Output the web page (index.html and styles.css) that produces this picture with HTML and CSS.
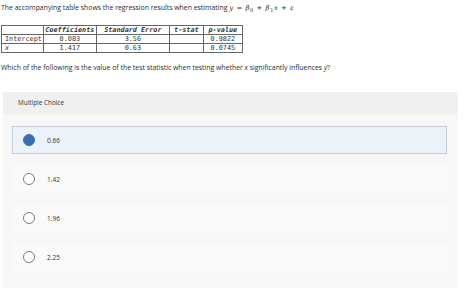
FILE: index.html
```html
<!DOCTYPE html>
<html lang="en">
<head>
    <meta charset="UTF-8">
    <title>Regression Question</title>
    <link rel="stylesheet" href="styles.css">
</head>
<body>
    <div class="question">
        <p class="stem">The accompanying table shows the regression results when estimating <span class="math"><i>y</i> = <i>β</i><sub>0</sub> + <i>β</i><sub>1</sub><i>x</i> + <i>ε</i></span></p>
        <table class="results">
            <tr>
                <th></th>
                <th>Coefficients</th>
                <th>Standard Error</th>
                <th>t-stat</th>
                <th>p-value</th>
            </tr>
            <tr>
                <td class="name">Intercept</td>
                <td>0.083</td>
                <td>3.56</td>
                <td></td>
                <td>0.9822</td>
            </tr>
            <tr>
                <td class="name"><i>x</i></td>
                <td>1.417</td>
                <td>0.63</td>
                <td></td>
                <td>0.0745</td>
            </tr>
        </table>
        <p class="ask">Which of the following is the value of the test statistic when testing whether <i>x</i> significantly influences <i>y</i>?</p>
    </div>

    <div class="choices">
        <div class="choices-head">Multiple Choice</div>
        <div class="choices-body">
            <label class="option selected"><span class="radio"></span>0.66</label>
            <label class="option"><span class="radio"></span>1.42</label>
            <label class="option"><span class="radio"></span>1.96</label>
            <label class="option"><span class="radio"></span>2.25</label>
        </div>
    </div>
</body>
</html>
```

FILE: styles.css
```css
* {
    box-sizing: border-box;
    margin: 0;
    padding: 0;
}
body {
    font-family: "Open Sans", Lato, sans-serif;
    font-size: 6.9px;
    color: #2a2a2a;
    background: #fff;
    width: 474px;
    height: 292px;
    overflow: hidden;
}
.question {
    padding: 3px 0 0 1px;
}
.stem {
    line-height: 9px;
    height: 22px;
}
.math {
    font-family: "DejaVu Serif", serif;
    font-size: 6.8px;
    letter-spacing: 0.6px;
}
.math sub {
    font-size: 5px;
}
.results {
    border-collapse: collapse;
    font-family: "DejaVu Sans Mono", monospace;
    font-size: 6.8px;
    color: #333;
}
.results th,
.results td {
    border: 1px solid #666;
    height: 9px;
    line-height: 7px;
    padding: 0 1px;
    text-align: center;
}
.results th {
    font-style: italic;
    font-weight: bold;
}
.results th:nth-child(1) { width: 41px; }
.results th:nth-child(2) { width: 53px; }
.results th:nth-child(3) { width: 73px; }
.results th:nth-child(4) { width: 34px; }
.results th:nth-child(5) { width: 39px; }
.results td.name {
    text-align: left;
    padding-left: 3px;
}
.ask {
    margin-top: 10px;
    line-height: 9px;
}
.choices {
    margin: 20px 0 0 3px;
    width: 455px;
    background: #f7f7f7;
    padding-bottom: 17px;
}
.choices-head {
    background: #f0f0f0;
    height: 22px;
    line-height: 22px;
    padding-left: 15px;
    font-size: 6.4px;
    color: #333;
}
.choices-body {
    display: flex;
    flex-direction: column;
    gap: 11px;
    padding: 12px 11px 0 9px;
}
.option {
    display: flex;
    align-items: center;
    height: 28px;
    padding-left: 10px;
    background: #fafafa;
    border: 1px solid transparent;
    font-size: 6.5px;
    color: #333;
}
.option.selected {
    background: #ebf2fa;
    border-color: #c3ccd6;
}
.radio {
    width: 12px;
    height: 12px;
    border: 1px solid #7a7a7a;
    border-radius: 50%;
    background: #fff;
    margin-right: 12px;
}
.option.selected .radio {
    background: #3b6db3;
    border-color: #3b6db3;
}
```
